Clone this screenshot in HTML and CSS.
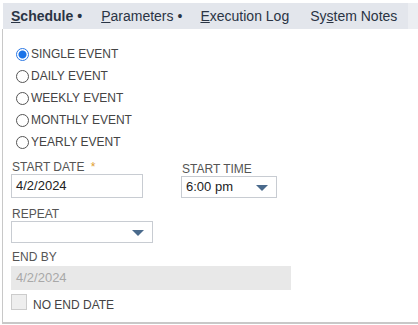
FILE: index.html
```html
<!DOCTYPE html>
<html>
	<head>
		<meta charset="UTF-8">
		<title>Schedule</title>
		<link rel="stylesheet" href="styles.css">
	</head>
	<body>
		<div class="wrap">
			<div class="tabs">
				<span class="tab active"><u>S</u>chedule<i>•</i></span>
				<span class="tab"><u>P</u>arameters<i>•</i></span>
				<span class="tab"><u>E</u>xecution Log</span>
				<span class="tab">Sy<u>s</u>tem Notes</span>
				<span class="tabs-end"></span>
			</div>
			<div class="panel">
				<ul class="radios">
					<li><span class="radio on"></span>SINGLE EVENT</li>
					<li><span class="radio"></span>DAILY EVENT</li>
					<li><span class="radio"></span>WEEKLY EVENT</li>
					<li><span class="radio"></span>MONTHLY EVENT</li>
					<li><span class="radio"></span>YEARLY EVENT</li>
				</ul>
				<div class="row">
					<div class="field">
						<label>START DATE <b>*</b></label>
						<div class="input date">4/2/2024</div>
					</div>
					<div class="field time">
						<label>START TIME</label>
						<div class="input select small">6:00 pm<span class="arrow"></span></div>
					</div>
				</div>
				<div class="field repeat-field">
					<label>REPEAT</label>
					<div class="input select repeat"><span class="arrow"></span></div>
				</div>
				<div class="field">
					<label>END BY</label>
					<div class="input disabled">4/2/2024</div>
				</div>
				<div class="check"><span class="box"></span><span class="txt">NO END DATE</span></div>
			</div>
		</div>
	</body>
</html>
```
FILE: styles.css
```css
* {
	margin: 0;
	padding: 0;
	box-sizing: border-box;
}

body {
	font-family: "Liberation Sans", Arial, sans-serif;
	background: #fff;
	color: #333;
}

.wrap {
	padding-top: 3px;
	width: 418px;
}

.tabs {
	display: flex;
	height: 26px;
	margin-left: 3px;
	background: #e3e6ec;
	align-items: center;
	font-size: 14px;
	color: #2a3444;
}

.tab {
	padding-left: 8px;
	white-space: nowrap;
}

.tab i {
	font-style: normal;
	margin-left: 4px;
}

.tab.active {
	font-weight: bold;
	position: relative;
	margin-right: 11px;
}

.tab.active::after {
	content: "";
	position: absolute;
	left: 28px;
	top: 20px;
	border: 6px solid transparent;
	border-bottom-color: #fff;
}

.tab:nth-child(2) {
	margin-right: 10px;
}

.tab:nth-child(3) {
	margin-right: 13px;
}

.tabs-end {
	margin-left: auto;
	width: 10px;
	height: 26px;
	background: #eceef2;
}

.panel {
	margin-left: 2px;
	width: 416px;
	height: 295px;
	border-left: 1px solid #c8c8c8;
	border-bottom: 2px solid #c8c8c8;
	padding: 14px 0 0 8px;
	font-size: 12px;
	color: #444;
}

.radios {
	list-style: none;
	margin-left: 5px;
}

.radios li {
	display: flex;
	align-items: center;
	height: 22px;
}

.radio {
	width: 13px;
	height: 13px;
	border: 1px solid #555;
	border-radius: 50%;
	margin-right: 2px;
	background: #fff;
}

.radio.on {
	border: 1px solid #2b78e4;
	background: radial-gradient(circle, #1a73e8 0 3.5px, #fff 4.5px);
}

.row {
	display: flex;
	margin-top: 8px;
}

.field label {
	display: block;
	font-size: 12px;
	line-height: 12px;
	color: #555;
	margin-left: 1px;
}

.field label b {
	color: #e0a030;
	font-weight: normal;
	margin-left: 3px;
}

.field.time {
	margin-left: 38px;
	padding-top: 2px;
}

.input {
	border: 1px solid #c8ccd2;
	height: 24px;
	font-size: 13px;
	line-height: 22px;
	padding-left: 4px;
	color: #222;
	margin-top: 1px;
	background: #fff;
}

.input.date {
	width: 132px;
}

.select {
	position: relative;
}

.input.small {
	width: 96px;
	height: 22px;
	line-height: 20px;
}

.repeat-field {
	margin-top: 10px;
}

.input.repeat {
	width: 142px;
	height: 22px;
	margin-bottom: 8px;
}

.arrow {
	position: absolute;
	right: 8px;
	top: 8px;
	border-left: 6px solid transparent;
	border-right: 6px solid transparent;
	border-top: 6px solid #4a6a8c;
}

.input.disabled {
	width: 280px;
	background: #e8e8e8;
	border-color: #e8e8e8;
	color: #a8a8a8;
	margin-top: 3px;
}

.check {
	display: flex;
	align-items: flex-end;
	margin-top: 4px;
	font-size: 12px;
	color: #444;
}

.check .box {
	width: 16px;
	height: 16px;
	border: 1px solid #ccc;
	background: #eee;
	margin-right: 6px;
}

.check .txt {
	margin-bottom: -2px;
}
```
